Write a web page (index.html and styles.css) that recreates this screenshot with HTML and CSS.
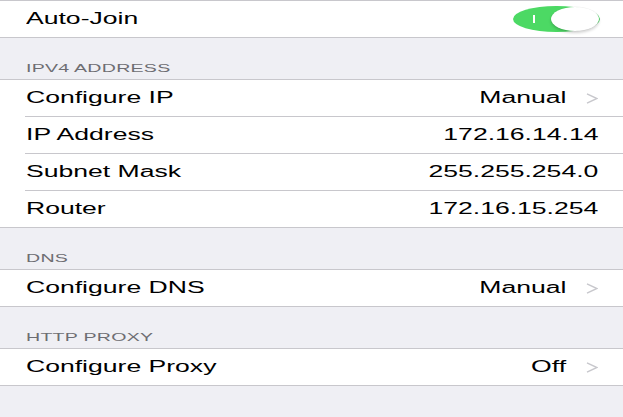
FILE: index.html
```html
<!DOCTYPE html>
<html>
<head>
<meta charset="utf-8">
<link rel="stylesheet" href="styles.css">
</head>
<body>
<div class="page">
  <div class="group">
    <div class="row first">
      <span class="label"><span class="t">Auto-Join</span></span>
      <span class="toggle"><span class="on-mark"></span><span class="knob"></span></span>
    </div>
  </div>

  <div class="header"><span class="ht">IPV4 ADDRESS</span></div>
  <div class="group">
    <div class="row">
      <span class="label"><span class="t">Configure IP</span></span>
      <span class="value"><span class="tv">Manual</span><svg class="chev" viewBox="0 0 12 11"><polyline points="1,0.8 11,5.5 1,10.2"/></svg></span>
    </div>
    <div class="row">
      <span class="label"><span class="t">IP Address</span></span>
      <span class="value plain"><span class="tv">172.16.14.14</span></span>
    </div>
    <div class="row">
      <span class="label"><span class="t">Subnet Mask</span></span>
      <span class="value plain"><span class="tv">255.255.254.0</span></span>
    </div>
    <div class="row">
      <span class="label"><span class="t">Router</span></span>
      <span class="value plain"><span class="tv">172.16.15.254</span></span>
    </div>
  </div>

  <div class="header"><span class="ht">DNS</span></div>
  <div class="group">
    <div class="row">
      <span class="label"><span class="t">Configure DNS</span></span>
      <span class="value"><span class="tv">Manual</span><svg class="chev" viewBox="0 0 12 11"><polyline points="1,0.8 11,5.5 1,10.2"/></svg></span>
    </div>
  </div>

  <div class="header"><span class="ht">HTTP PROXY</span></div>
  <div class="group">
    <div class="row">
      <span class="label"><span class="t">Configure Proxy</span></span>
      <span class="value"><span class="tv">Off</span><svg class="chev" viewBox="0 0 12 11"><polyline points="1,0.8 11,5.5 1,10.2"/></svg></span>
    </div>
  </div>
</div>
</body>
</html>
```

FILE: styles.css
```css
html, body {
  margin: 0;
  padding: 0;
  background: #efeff4;
}

.page {
  font-family: "Liberation Sans", Arial, sans-serif;
  color: #000;
  min-height: 417px;
  overflow: hidden;
}

.group {
  background: #fff;
  border-top: 1px solid #c8c7cc;
  border-bottom: 1px solid #c8c7cc;
}

.row {
  height: 36px;
  margin-left: 25px;
  padding: 0 25px 0 1px;
  display: flex;
  align-items: center;
  justify-content: space-between;
}

.row + .row {
  border-top: 1px solid #c8c7cc;
}

.row.first {
  padding-right: 23px;
}

.label, .value {
  font-size: 16px;
  line-height: 20px;
  white-space: nowrap;
}

.t {
  display: inline-block;
  transform: scaleX(1.66);
  transform-origin: left center;
}

.tv {
  display: inline-block;
  transform: scaleX(1.66);
  transform-origin: right center;
}

.value {
  display: flex;
  align-items: center;
}

.chev {
  width: 12px;
  height: 11px;
  margin-left: 20px;
  fill: none;
  stroke: #c7c7cc;
  stroke-width: 1.4;
}

.header {
  height: 41px;
  display: flex;
  align-items: flex-end;
  padding: 0 0 4px 26px;
  box-sizing: border-box;
  font-size: 11.8px;
  line-height: 14px;
  color: #6d6d72;
}

.ht {
  display: inline-block;
  transform: scaleX(1.66);
  transform-origin: left center;
  white-space: nowrap;
  letter-spacing: 0.15px;
}

.toggle {
  position: relative;
  width: 87px;
  height: 26px;
  border-radius: 43px / 13px;
  background: #4cd964;
  display: block;
}

.on-mark {
  position: absolute;
  left: 20px;
  top: 9px;
  width: 2px;
  height: 8px;
  background: #fff;
}

.knob {
  position: absolute;
  right: 1px;
  top: 1px;
  width: 48px;
  height: 24px;
  border-radius: 50%;
  background: #fff;
  box-shadow: 0 2px 3px rgba(0, 0, 0, 0.18), 0 0 0 0.5px rgba(0, 0, 0, 0.06);
}
```
